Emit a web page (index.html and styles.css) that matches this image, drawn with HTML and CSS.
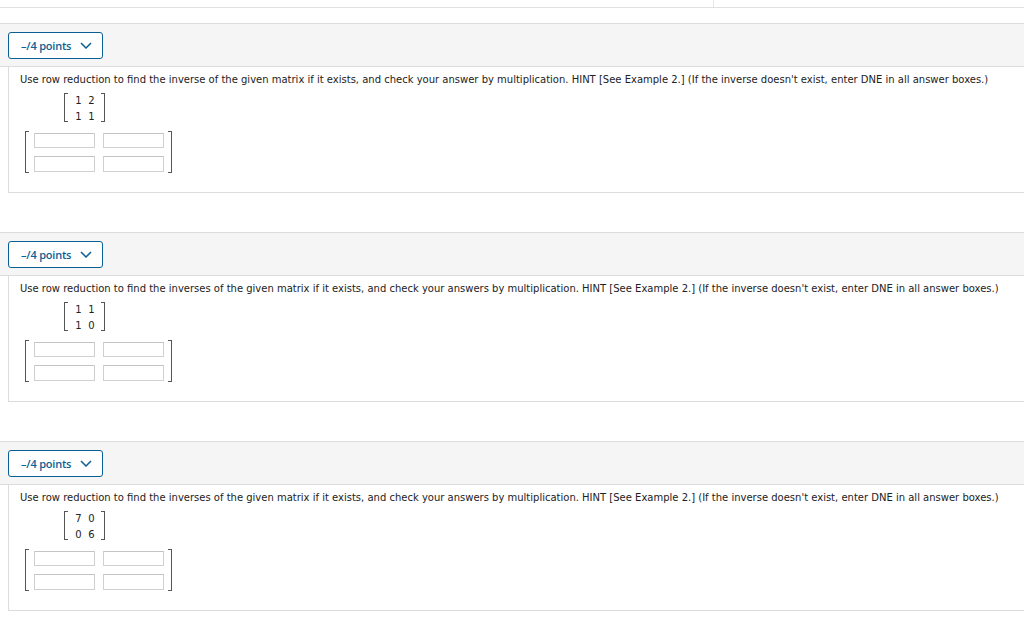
FILE: index.html
```html
<!DOCTYPE html>
<html>
<head>
<meta charset="utf-8">
<link rel="stylesheet" href="styles.css">
</head>
<body>
<div class="topstrip"><div class="topcell"></div></div>

<div class="section">
  <div class="qhead">
    <button class="points">–/4 points <svg class="chev" width="12" height="7" viewBox="0 0 12 7"><path d="M1 1 L6 6 L11 1" fill="none" stroke="#0b5f94" stroke-width="1.5"/></svg></button>
  </div>
  <div class="qbody">
    <p class="qtext">Use row reduction to find the inverse of the given matrix if it exists, and check your answer by multiplication. HINT [See Example 2.] (If the inverse doesn't exist, enter DNE in all answer boxes.)</p>
    <div class="mat">
      <span class="br l"></span>
      <div class="cells"><span>1</span><span>2</span><span>1</span><span>1</span></div>
      <span class="br r"></span>
    </div>
    <div class="ans">
      <span class="abr l"></span>
      <div class="inputs"><input type="text"><input type="text"><input type="text"><input type="text"></div>
      <span class="abr r"></span>
    </div>
  </div>
</div>

<div class="section">
  <div class="qhead">
    <button class="points">–/4 points <svg class="chev" width="12" height="7" viewBox="0 0 12 7"><path d="M1 1 L6 6 L11 1" fill="none" stroke="#0b5f94" stroke-width="1.5"/></svg></button>
  </div>
  <div class="qbody">
    <p class="qtext">Use row reduction to find the inverses of the given matrix if it exists, and check your answers by multiplication. HINT [See Example 2.] (If the inverse doesn't exist, enter DNE in all answer boxes.)</p>
    <div class="mat">
      <span class="br l"></span>
      <div class="cells"><span>1</span><span>1</span><span>1</span><span>0</span></div>
      <span class="br r"></span>
    </div>
    <div class="ans">
      <span class="abr l"></span>
      <div class="inputs"><input type="text"><input type="text"><input type="text"><input type="text"></div>
      <span class="abr r"></span>
    </div>
  </div>
</div>

<div class="section">
  <div class="qhead">
    <button class="points">–/4 points <svg class="chev" width="12" height="7" viewBox="0 0 12 7"><path d="M1 1 L6 6 L11 1" fill="none" stroke="#0b5f94" stroke-width="1.5"/></svg></button>
  </div>
  <div class="qbody">
    <p class="qtext">Use row reduction to find the inverses of the given matrix if it exists, and check your answers by multiplication. HINT [See Example 2.] (If the inverse doesn't exist, enter DNE in all answer boxes.)</p>
    <div class="mat">
      <span class="br l"></span>
      <div class="cells"><span>7</span><span>0</span><span>0</span><span>6</span></div>
      <span class="br r"></span>
    </div>
    <div class="ans">
      <span class="abr l"></span>
      <div class="inputs"><input type="text"><input type="text"><input type="text"><input type="text"></div>
      <span class="abr r"></span>
    </div>
  </div>
</div>
</body>
</html>
```

FILE: styles.css
```css
html, body {
  margin: 0;
  padding: 0;
  background: #fff;
}
body {
  font-family: "DejaVu Sans", Verdana, sans-serif;
  color: #222;
}
.topstrip {
  height: 7px;
  border-bottom: 1px solid #e0e0e0;
}
.topcell {
  width: 713px;
  height: 7px;
  border-right: 1px solid #e6e6e6;
}
.section {
  margin-top: 15px;
  margin-bottom: 39px;
}
.qhead {
  background: #f5f5f5;
  border-top: 1px solid #dcdcdc;
  border-bottom: 1px solid #dcdcdc;
  padding: 8px 8px 7px;
  display: flex;
}
.points {
  box-sizing: border-box;
  width: 95px;
  height: 27px;
  border: 1.5px solid #0b5f94;
  border-radius: 3px;
  background: #fff;
  color: #0b5f94;
  font-family: "Open Sans", "Noto Sans", sans-serif;
  font-weight: 600;
  font-size: 11px;
  display: flex;
  align-items: center;
  padding: 0 0 0 12px;
  gap: 9px;
  letter-spacing: -0.2px;
}
.chev {
  display: block;
}
.qbody {
  margin-left: 8px;
  border-left: 1px solid #dcdcdc;
  border-bottom: 1px solid #dcdcdc;
  padding: 7px 11px 19px;
}
.qtext {
  margin: 0;
  font-size: 10px;
  line-height: 12px;
  color: #222;
}
.mat {
  display: flex;
  margin: 7px 0 0 44px;
  height: 29px;
}
.br {
  width: 3px;
  border-top: 1px solid #555;
  border-bottom: 1px solid #555;
}
.br.l { border-left: 1px solid #555; }
.br.r { border-right: 1px solid #555; }
.cells {
  display: grid;
  grid-template-columns: 13px 13px;
  grid-template-rows: 13px 13px;
  row-gap: 3px;
  padding: 1px 3px 0 4px;
  font-size: 10px;
  line-height: 13px;
  color: #222;
  text-align: center;
}
.ans {
  display: flex;
  margin: 9px 0 0 5px;
  height: 42px;
}
.abr {
  width: 3px;
  border-top: 1px solid #555;
  border-bottom: 1px solid #555;
}
.abr.l { border-left: 1px solid #555; }
.abr.r { border-right: 1px solid #555; }
.inputs {
  display: grid;
  grid-template-columns: 61px 61px;
  grid-template-rows: 15px 16px;
  column-gap: 8px;
  row-gap: 8px;
  padding: 2px 4px 0 5px;
}
.inputs input {
  box-sizing: border-box;
  width: 61px;
  height: 100%;
  margin: 0;
  padding: 0;
  border: 1px solid #d0d0d0;
  border-top-color: #c4c4c4;
  background: #fff;
  outline: none;
}
```
